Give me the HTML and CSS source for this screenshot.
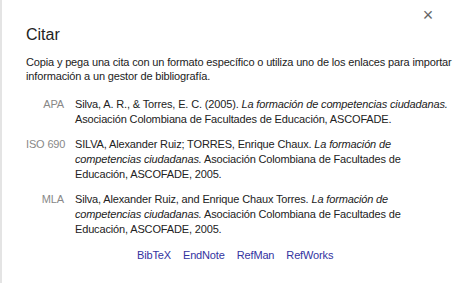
FILE: index.html
```html
<!DOCTYPE html>
<html lang="es">
<head>
	<meta charset="utf-8" />
	<title>Citar</title>
	<link rel="stylesheet" href="styles.css">
</head>
<body>
	<div class="dialog">
		<div class="close">&times;</div>
		<h2 class="title">Citar</h2>
		<p class="intro">Copia y pega una cita con un formato específico o utiliza uno de los enlaces para importar<br>información a un gestor de bibliografía.</p>
		<div class="cites">
			<div class="label">APA</div>
			<div class="cite">Silva, A. R., &amp; Torres, E. C. (2005). <i>La formación de competencias ciudadanas.</i><br>Asociación Colombiana de Facultades de Educación, ASCOFADE.</div>
			<div class="label">ISO 690</div>
			<div class="cite">SILVA, Alexander Ruiz; TORRES, Enrique Chaux. <i>La formación de</i><br><i>competencias ciudadanas.</i> Asociación Colombiana de Facultades de<br>Educación, ASCOFADE, 2005.</div>
			<div class="label">MLA</div>
			<div class="cite">Silva, Alexander Ruiz, and Enrique Chaux Torres. <i>La formación de</i><br><i>competencias ciudadanas.</i> Asociación Colombiana de Facultades de<br>Educación, ASCOFADE, 2005.</div>
		</div>
		<div class="links">
			<a href="#">BibTeX</a>
			<a href="#">EndNote</a>
			<a href="#">RefMan</a>
			<a href="#">RefWorks</a>
		</div>
	</div>
</body>
</html>
```

FILE: styles.css
```css
html {
	background-color: white;
	font-family: "Liberation Sans", Arial, Helvetica, sans-serif;
	font-size: 11px;
	letter-spacing: -0.15px;
	color: #222;
}

body {
	margin: 0;
	padding: 0;
}

.dialog {
	height: 283px;
	box-sizing: border-box;
	border-left: 2px solid #e4e4e4;
	padding: 25px 20px 0 24px;
	position: relative;
}

.close {
	position: absolute;
	top: 5px;
	right: 41px;
	font-size: 18px;
	color: #666;
}

.title {
	margin: 0;
	font-size: 16px;
	font-weight: normal;
	line-height: 20px;
	letter-spacing: 0;
	color: #222;
}

.intro {
	margin: 10px 0 0 0;
	line-height: 14px;
	white-space: nowrap;
}

.cites {
	display: grid;
	grid-template-columns: 38px auto;
	column-gap: 11px;
	row-gap: 10px;
	margin-top: 14px;
	line-height: 15px;
}

.label {
	text-align: right;
	color: #888;
	white-space: nowrap;
}

.cite {
	white-space: nowrap;
}

.links {
	display: flex;
	gap: 12px;
	margin-top: 11px;
	padding-left: 111px;
	line-height: 15px;
}

.links a {
	color: #33339f;
	text-decoration: none;
}
```
